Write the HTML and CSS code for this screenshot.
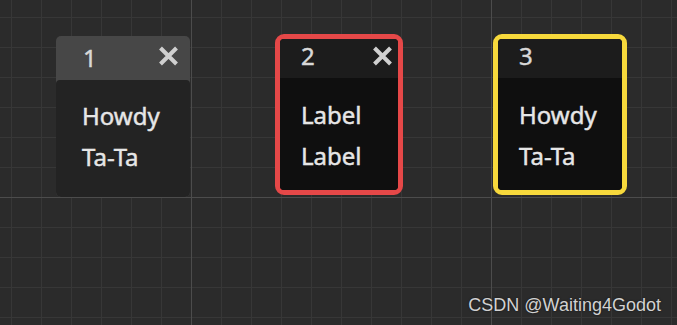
FILE: index.html
```html
<!DOCTYPE html>
<html>
<head>
<meta charset="utf-8">
<link rel="stylesheet" href="styles.css">
</head>
<body>
<div class="canvas">
  <div class="node node-plain">
    <div class="title">
      <span class="title-text">1</span>
      <svg class="close" viewBox="0 0 21 20" width="21" height="20"><path d="M2.5 2 L18.5 18 M18.5 2 L2.5 18"/></svg>
    </div>
    <div class="body">
      <div class="line">Howdy</div>
      <div class="line">Ta-Ta</div>
    </div>
  </div>

  <div class="node node-red">
    <div class="title">
      <span class="title-text">2</span>
      <svg class="close" viewBox="0 0 21 20" width="21" height="20"><path d="M2.5 2 L18.5 18 M18.5 2 L2.5 18"/></svg>
    </div>
    <div class="body">
      <div class="line">Label</div>
      <div class="line">Label</div>
    </div>
  </div>

  <div class="node node-yellow">
    <div class="title">
      <span class="title-text">3</span>
    </div>
    <div class="body">
      <div class="line">Howdy</div>
      <div class="line">Ta-Ta</div>
    </div>
  </div>

  <div class="watermark">CSDN @Waiting4Godot</div>
</div>
</body>
</html>
```

FILE: styles.css
```css
html, body {
  margin: 0;
  padding: 0;
}

body {
  width: 677px;
  height: 325px;
  overflow: hidden;
  background-color: #2b2b2b;
  background-image:
    linear-gradient(to right, #4c4c4c 1px, transparent 1px),
    linear-gradient(to bottom, #4c4c4c 1px, transparent 1px),
    linear-gradient(to right, #373737 1px, transparent 1px),
    linear-gradient(to bottom, #373737 1px, transparent 1px);
  background-size: 300px 300px, 300px 300px, 30px 30px, 30px 30px;
  background-position: 191px 0, 0 197px, 11px 0, 0 17px;
  font-family: "Noto Sans", "Open Sans", sans-serif;
}

.canvas {
  position: relative;
  width: 677px;
  height: 325px;
}

.node {
  position: absolute;
  box-sizing: border-box;
  display: flex;
  flex-direction: column;
  overflow: hidden;
  color: #e6e6e6;
  font-size: 24px;
  -webkit-text-stroke: 0.45px currentColor;
}

.title {
  display: flex;
  align-items: flex-start;
  flex: none;
}

.title-text {
  line-height: 33px;
  color: #d8d8d8;
}

.close {
  margin-left: auto;
  flex: none;
}

.close path {
  stroke: #d0d0d0;
  stroke-width: 4;
  fill: none;
}

.body {
  flex: 1;
}

.line {
  line-height: 41px;
}

/* node 1: unselected */
.node-plain {
  left: 56px;
  top: 36px;
  width: 134px;
  height: 161px;
  border-radius: 5px;
  background: #474747;
}

.node-plain .title {
  height: 44px;
  padding: 5px 11px 0 27px;
  box-sizing: border-box;
}

.node-plain .close {
  margin-top: 5px;
}

.node-plain .body {
  background: #232323;
  border-radius: 4px;
  padding: 15px 0 0 26px;
}

/* selected / bordered nodes */
.node-red,
.node-yellow {
  top: 34px;
  height: 161px;
  border: 5px solid;
  border-radius: 9px;
  background: #0f0f0f;
}

.node-red {
  left: 275px;
  width: 128px;
  border-color: #e54848;
}

.node-yellow {
  left: 493px;
  width: 134px;
  border-color: #f7d93c;
}

.node-red .title,
.node-yellow .title {
  height: 39px;
  padding: 0 5px 0 21px;
  box-sizing: border-box;
  background: #1c1c1c;
}

.node-red .close {
  margin-top: 7px;
}

.node-red .body,
.node-yellow .body {
  background: #0f0f0f;
  padding: 16px 0 0 21px;
}

.watermark {
  position: absolute;
  right: 16px;
  top: 295px;
  font-family: "Liberation Sans", Arial, sans-serif;
  font-size: 18px;
  line-height: 20px;
  color: #d2d2d2;
  text-shadow: 0 0 2px rgba(0, 0, 0, 0.6);
}
```
